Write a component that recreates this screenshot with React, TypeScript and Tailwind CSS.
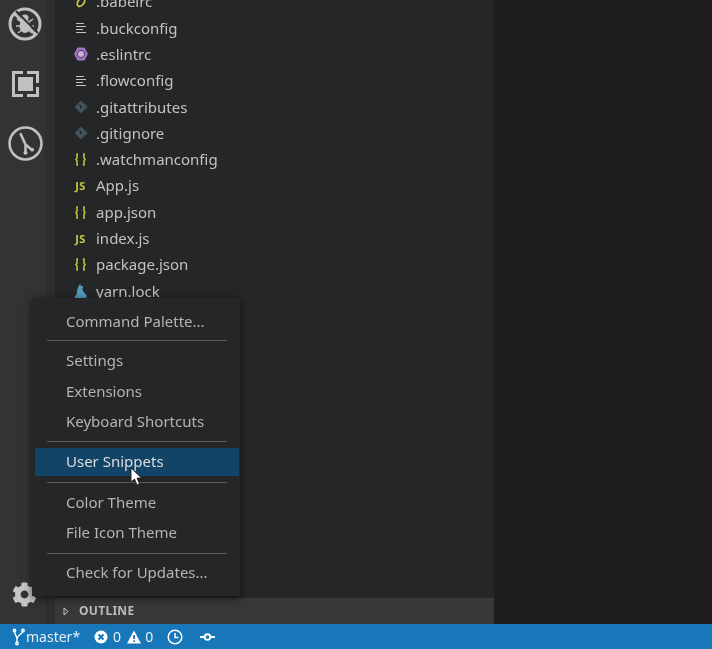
import React from "react";
import { FaCog } from "react-icons/fa";

const Lines = () => (
  <svg width="12" height="12" viewBox="0 0 12 12" stroke="#c5c5c5" strokeWidth="1.200">
    <path d="M1 1.500h8M1 4.500h10M1 7.500h7M1 10.500h10" />
  </svg>
);
const Braces = () => (
  <svg width="13" height="13" viewBox="0 0 13 13" fill="none" stroke="#c5c840" strokeWidth="1.500">
    <path d="M4 1H3v4L2 6.500 3 8v4h1M9 1h1v4l1 1.500L10 8v4H9" />
  </svg>
);
const Js = () => <span className="text-[11px] font-bold text-[#c5c840] leading-none tracking-[0.5px]">JS</span>;
const Git = () => (
  <svg width="14" height="14" viewBox="0 0 14 14">
    <path d="M7 0.500l6.500 6.500-6.500 6.500L0.500 7z" fill="#41535b" />
    <path d="M5.500 4.500l3 3M6.500 5.500v3" stroke="#242628" strokeWidth="1" />
  </svg>
);
const Eslint = () => (
  <svg width="16" height="16" viewBox="0 0 16 16">
    <path d="M4.500 1.500h7L15 8l-3.500 6.500h-7L1 8z" fill="#a074c4" />
    <circle cx="8" cy="8" r="3.600" fill="#c9b3da" stroke="#4b3a5a" strokeWidth="1" />
  </svg>
);
const Yarn = () => (
  <svg width="14" height="14" viewBox="0 0 14 14">
    <path d="M6 0l1 2 2 0c0 2-1 3 0 5 1 2 3 3 4 5 0 1-1 2-2 2H2c-1 0-2-1-1-2 2-1 2-3 2-5s1-4 3-7z" fill="#519aba" />
  </svg>
);
const Babel = () => (
  <svg width="12" height="12" viewBox="0 0 12 12" fill="none" stroke="#c5c840" strokeWidth="1.800">
    <ellipse cx="6" cy="6" rx="3" ry="4.800" transform="rotate(35 6 6)" />
  </svg>
);

const files: [string, React.ReactNode][] = [
  [".babelrc", <Babel />],
  [".buckconfig", <Lines />],
  [".eslintrc", <Eslint />],
  [".flowconfig", <Lines />],
  [".gitattributes", <Git />],
  [".gitignore", <Git />],
  [".watchmanconfig", <Braces />],
  ["App.js", <Js />],
  ["app.json", <Braces />],
  ["index.js", <Js />],
  ["package.json", <Braces />],
  ["yarn.lock", <Yarn />],
];

const Item = ({ label, active }: { label: string; active?: boolean }) => (
  <div className={`ml-[3px] mr-px flex items-center pl-[31px] ${active ? "h-[28px] my-px bg-[#124468] text-[#dcdcdc]" : "h-[30.4px] text-[#b4b4b4]"}`}>
    {label}
  </div>
);
const Sep = ({ gap = "mt-1 mb-[5px]" }: { gap?: string }) => <div className={`ml-[15px] mr-[13px] ${gap} h-px bg-[#5a5a5a]`} />;

export default function App() {
  return (
    <div className="relative flex h-[649px] w-[712px] flex-col overflow-hidden bg-[#1f1e1c] text-[15px] font-['Noto_Sans','Open_Sans',sans-serif] blur-[0.5px]">
      <div className="flex min-h-0 flex-1">
        <div className="flex w-[55px] shrink-0 flex-col items-center border-r-[10px] border-[#2f2e2c] bg-[#343331] pl-[5px] text-[#c5c5c5]">
          <svg className="mt-[7px] shrink-0" width="34" height="34" viewBox="0 0 34 34" fill="none" stroke="#c0c0c0">
            <circle cx="17" cy="17" r="15" strokeWidth="3" />
            <path d="M6 6l22 22" strokeWidth="3" />
            <ellipse cx="17" cy="19" rx="5.500" ry="7" fill="#c0c0c0" stroke="none" />
            <circle cx="17" cy="11" r="3.500" fill="#c0c0c0" stroke="none" />
            <path d="M9 12l4 3M25 12l-4 3M8 19h5M26 19h-5M10 26l4-3M24 26l-4-3" strokeWidth="1.500" />
            <path d="M6 6l22 22" strokeWidth="2" stroke="#343331" transform="translate(2 -2)" />
          </svg>
          <svg className="mt-[29px] shrink-0" width="27" height="28" viewBox="0 0 27 28" fill="#c0c0c0">
            <path d="M0 1h11v3H3v20h8v3H0z" />
            <path d="M15 1h12v12h-3V4h-9zM15 24h9v-7h3v10H15z" />
            <rect x="6" y="7" width="15" height="14" />
          </svg>
          <svg className="mt-[28px] shrink-0" width="35" height="35" viewBox="0 0 34 34" fill="none" stroke="#c0c0c0">
            <circle cx="17" cy="17" r="15.500" strokeWidth="2.500" />
            <path d="M12 7l5 11v8M17 18l6 5" strokeWidth="2.500" />
            <circle cx="17" cy="26" r="2" fill="#c0c0c0" stroke="none" />
            <circle cx="23.500" cy="23" r="1.800" fill="#c0c0c0" stroke="none" />
          </svg>
          <FaCog className="mt-auto mb-[17px] ml-[-2px] shrink-0" size={25} color="#c5c5c5" />
        </div>
        <div className="flex w-[439px] shrink-0 flex-col bg-[#242628]">
          <div className="mt-[-11.5px] min-h-0 flex-1">
            {files.map(([name, icon]) => (
              <div key={name} className="flex h-[26.3px] items-center text-[#c2c2c2]">
                <span className="flex w-[41px] shrink-0 items-center justify-center pl-[10px]">{icon}</span>
                <span>{name}</span>
              </div>
            ))}
          </div>
          <div className="flex h-[26px] items-center bg-[#383836] pl-[8px] text-[12px] font-bold tracking-[0.3px] text-[#bcbcbc]">
            <svg width="6" height="9" viewBox="0 0 6 9" fill="none" stroke="#c5c5c5" className="mr-[10px]">
              <path d="M1 1l4 3.500-4 3.500z" />
            </svg>
            OUTLINE
          </div>
        </div>
        <div className="flex-1 bg-[#1f1e1c]" />
      </div>
      <div className="flex h-[25px] shrink-0 items-center bg-[#1777b9] pl-[12px] text-[14px] text-[#e8eef3]">
        <svg width="14" height="18" viewBox="0 0 14 18" fill="none" stroke="#fff" strokeWidth="1.400">
          <path d="M2.500 2.500C2.500 7 5 8 5 11v4M11 2.500c0 4-6 4-6 8.500" />
          <circle cx="5" cy="15.500" r="1.200" />
          <circle cx="11" cy="2.500" r="1.200" />
          <circle cx="2.500" cy="2.500" r="1.200" />
        </svg>
        <span>master*</span>
        <svg className="ml-[14px]" width="14" height="14" viewBox="0 0 14 14">
          <circle cx="7" cy="7" r="6.500" fill="#fff" />
          <path d="M4.500 4.500l5 5M9.500 4.500l-5 5" stroke="#1777b9" strokeWidth="2" />
        </svg>
        <span className="ml-[5px]">0</span>
        <svg className="ml-[6px]" width="14" height="14" viewBox="0 0 14 14">
          <path d="M7 0.500L14 13.500H0z" fill="#fff" />
          <path d="M7 5v4M7 10.500v1.500" stroke="#1777b9" strokeWidth="1.800" />
        </svg>
        <span className="ml-[4px]">0</span>
        <svg className="ml-[14px]" width="16" height="16" viewBox="0 0 16 16" fill="none" stroke="#fff" strokeWidth="1.500">
          <circle cx="8" cy="8" r="6.800" />
          <path d="M8 4v4.500h3.500" />
        </svg>
        <svg className="ml-[17px]" width="15" height="10" viewBox="0 0 16 10" fill="none" stroke="#fff" strokeWidth="2">
          <circle cx="8" cy="5" r="3" />
          <path d="M0 5h5M11 5h5" />
        </svg>
      </div>

      <div className="absolute left-[32px] top-[298px] w-[208px] bg-[#242628] pt-2 pb-[8px] shadow-[0_2px_8px_rgba(0,0,0,0.6)]">
        <Item label="Command Palette..." />
        <Sep gap="mt-1 mb-[4px]" />
        <Item label="Settings" />
        <Item label="Extensions" />
        <Item label="Keyboard Shortcuts" />
        <Sep gap="mt-[4px] mb-[6px]" />
        <Item label="User Snippets" active />
        <Sep gap="mt-[6px] mb-[4px]" />
        <Item label="Color Theme" />
        <Item label="File Icon Theme" />
        <Sep gap="mt-[6px] mb-[3px]" />
        <Item label="Check for Updates..." />
      </div>
      <svg className="absolute left-[130px] top-[467px]" width="13" height="19" viewBox="0 0 13 19">
        <path d="M1 1v14l3.500-3 2.500 6 2.500-1-2.500-6h4.500z" fill="#fff" stroke="#111" strokeWidth="0.800" />
      </svg>
    </div>
  );
}
